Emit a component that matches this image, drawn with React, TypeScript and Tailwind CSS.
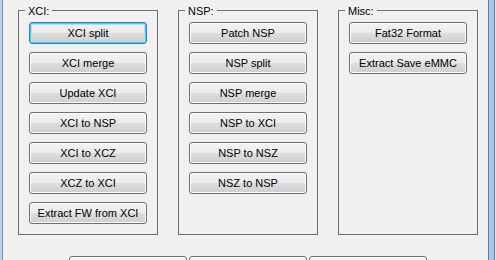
const groups = [
  {
    title: 'XCI:',
    buttons: ['XCI split', 'XCI merge', 'Update XCI', 'XCI to NSP', 'XCI to XCZ', 'XCZ to XCI', 'Extract FW from XCI'],
  },
  {
    title: 'NSP:',
    buttons: ['Patch NSP', 'NSP split', 'NSP merge', 'NSP to XCI', 'NSP to NSZ', 'NSZ to NSP'],
  },
  {
    title: 'Misc:',
    buttons: ['Fat32 Format', 'Extract Save eMMC'],
  },
]

function WinButton({ label, focused = false }: { label?: string; focused?: boolean }) {
  return (
    <button
      className={
        'flex h-[22px] w-[118px] shrink-0 items-center justify-center rounded-[3px] border text-[11px] leading-[13px] text-black ' +
        'bg-[linear-gradient(to_bottom,#f3f3f3_0%,#ebebeb_48%,#dddddd_52%,#cfcfcf_100%)] ' +
        (focused
          ? 'border-[#3c7fb1] shadow-[inset_0_0_0_1px_#49c9f2,inset_0_0_0_2px_#a6e3f6]'
          : 'border-[#707070] shadow-[inset_0_0_0_1px_#fbfbfb]')
      }
    >
      {label}
    </button>
  )
}

export default function App() {
  return (
    <div
      className="flex h-[260px] w-[496px] overflow-hidden bg-[#f0f0f0]"
      style={{ fontFamily: '"Liberation Sans", Arial, sans-serif' }}
    >
      {/* left window frame */}
      <div className="w-[2px] shrink-0 bg-[#bcd3ec]" />
      <div className="w-px shrink-0 bg-[#7f8fa3]" />

      {/* client area */}
      <div className="flex w-[485px] shrink-0 flex-col pt-[10px]">
        <div className="flex gap-[20px] pl-[15px]">
          {groups.map((g, gi) => (
            <div key={g.title} className="relative h-[225px] w-[140px] border border-[#6e6e6e]">
              <span className="absolute -top-[6px] left-[6px] bg-[#f0f0f0] px-[3px] text-[11px] leading-[13px] text-black">
                {g.title}
              </span>
              <div className="flex flex-col gap-[8px] pl-[10px] pt-[11px]">
                {g.buttons.map((b, bi) => (
                  <WinButton key={b} label={b} focused={gi === 0 && bi === 0} />
                ))}
              </div>
            </div>
          ))}
        </div>

        {/* bottom row, cut off by the window edge */}
        <div className="mt-[21px] flex gap-[2px] pl-[66px]">
          <WinButton />
          <WinButton />
          <WinButton />
        </div>
      </div>

      {/* right window frame */}
      <div className="w-px shrink-0 bg-[#6d7d90]" />
      <div className="w-[5px] shrink-0 bg-[#a9c6e8]" />
      <div className="w-px shrink-0 bg-[#6d7d90]" />
      <div className="w-px shrink-0 bg-[#d6e4f3]" />
    </div>
  )
}
